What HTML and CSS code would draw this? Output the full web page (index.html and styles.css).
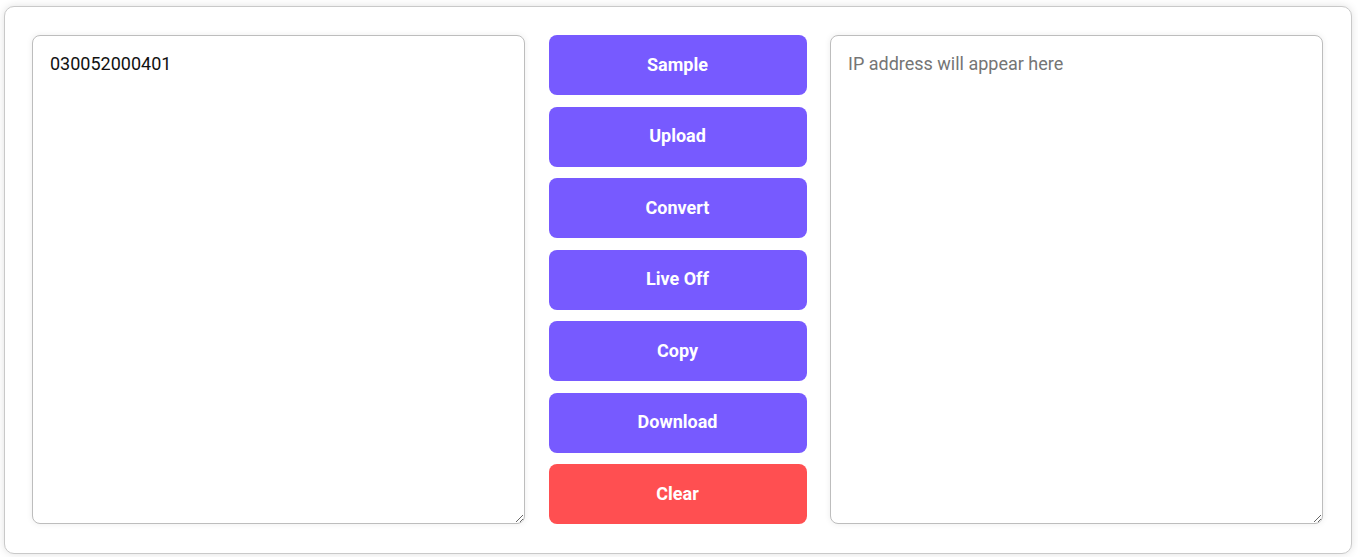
FILE: index.html
```html
<!DOCTYPE html>
<html lang="en">
<head>
<meta charset="utf-8">
<title>Hex to IP</title>
<link rel="stylesheet" href="styles.css">
</head>
<body>
<div class="card">
  <div class="tool">
    <textarea class="box">030052000401</textarea>
    <div class="actions">
      <button class="btn">Sample</button>
      <button class="btn">Upload</button>
      <button class="btn">Convert</button>
      <button class="btn">Live Off</button>
      <button class="btn">Copy</button>
      <button class="btn">Download</button>
      <button class="btn btn-danger">Clear</button>
    </div>
    <textarea class="box" placeholder="IP address will appear here"></textarea>
  </div>
</div>
</body>
</html>
```
FILE: styles.css
```css
html, body {
  margin: 0;
  padding: 0;
  background: #ffffff;
  font-family: Roboto, "Liberation Sans", Arial, sans-serif;
}
body {
  padding: 6px 6px 3px 4px;
}
.card {
  box-sizing: border-box;
  height: 548px;
  border: 1px solid #c9c9c9;
  border-radius: 10px;
  box-shadow: 0 0 8px rgba(0, 0, 0, 0.12);
  padding: 28px 28px 29px 27px;
  background: #fff;
}
.tool {
  height: 100%;
  display: grid;
  grid-template-columns: 1fr 258px 1fr;
  column-gap: 23.5px;
}
.box {
  box-sizing: border-box;
  width: 100%;
  height: 100%;
  margin: 0;
  border: 1px solid #bdbdbd;
  border-radius: 8px;
  padding: 17px 16px 17px 17px;
  font-family: Roboto, "Liberation Sans", Arial, sans-serif;
  font-size: 18px;
  line-height: normal;
  color: #111;
  background: #fff;
  box-shadow: 0 0 6px rgba(0, 0, 0, 0.08);
  outline: none;
}
.box::placeholder {
  color: #757575;
}
.actions {
  display: flex;
  flex-direction: column;
  justify-content: space-between;
}
.btn {
  height: 60px;
  border: none;
  border-radius: 8px;
  padding: 0 0 2px;
  background: #775aff;
  color: #fff;
  font-family: Roboto, "Liberation Sans", Arial, sans-serif;
  font-size: 18px;
  font-weight: 700;
  cursor: pointer;
}
.btn-danger {
  background: #ff4f51;
}
```
